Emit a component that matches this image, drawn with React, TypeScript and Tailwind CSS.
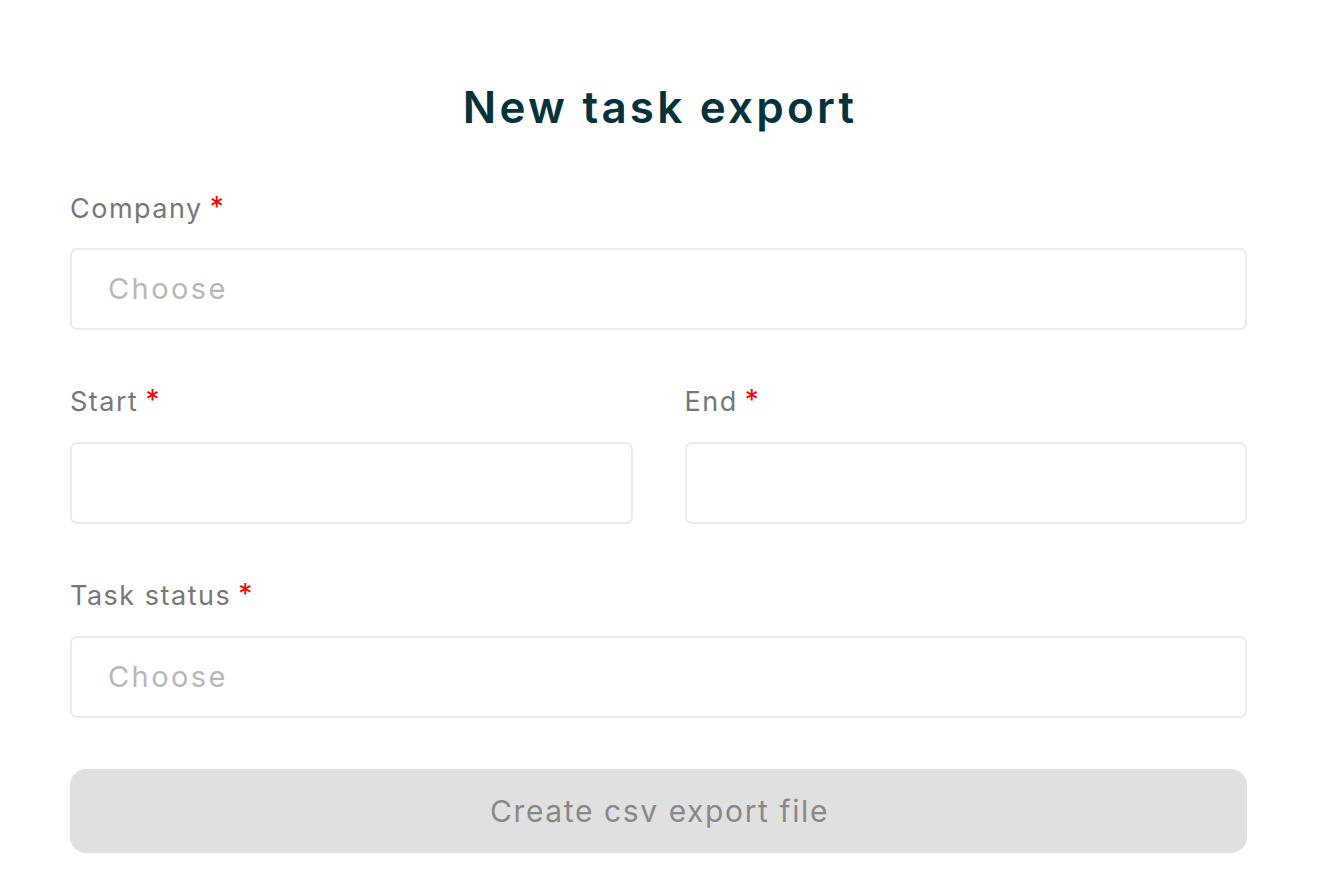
import React from "react";

const font = { fontFamily: "Inter, 'Open Sans', sans-serif" };

function Label({ text, className = "" }: { text: string; className?: string }) {
  return (
    <div className={"h-[32px] flex items-center text-[27px] leading-[32px] text-[#777777] " + className}>
      <span className="tracking-[1.5px]">{text}</span>
      <span className="ml-[7px] text-[#ff0000] text-[28px] leading-[32px] -mt-[4px]">*</span>
    </div>
  );
}

function Field({ placeholder, className = "" }: { placeholder?: string; className?: string }) {
  return (
    <div className={"h-[82px] border-2 border-[#ebebeb] rounded-[7px] bg-white flex items-center pl-[36px] " + className}>
      {placeholder && <span className="text-[29px] tracking-[2.4px] text-[#b8b8b8]">{placeholder}</span>}
    </div>
  );
}

export default function App() {
  return (
    <div className="w-[1317px] h-[893px] bg-white px-[70px] pt-[81px]" style={font}>
      <h1 className="text-center text-[44px] leading-[52px] font-semibold tracking-[3.2px] pl-[3px] text-[#06333b]">New task export</h1>
      <Label text="Company" className="mt-[60px]" />
      <Field placeholder="Choose" className="mt-[23px]" />
      <div className="grid grid-cols-2 gap-[52px] mt-[56px]">
        <div>
          <Label text="Start" />
          <Field className="mt-[24px]" />
        </div>
        <div>
          <Label text="End" />
          <Field className="mt-[24px]" />
        </div>
      </div>
      <Label text="Task status" className="mt-[56px]" />
      <Field placeholder="Choose" className="mt-[24px]" />
      <button className="mt-[51px] w-full h-[84px] rounded-[16px] bg-[#e0e0e0] text-[30px] tracking-[1.6px] pl-[2px] text-[#888888] flex items-center justify-center">
        Create csv export file
      </button>
    </div>
  );
}
